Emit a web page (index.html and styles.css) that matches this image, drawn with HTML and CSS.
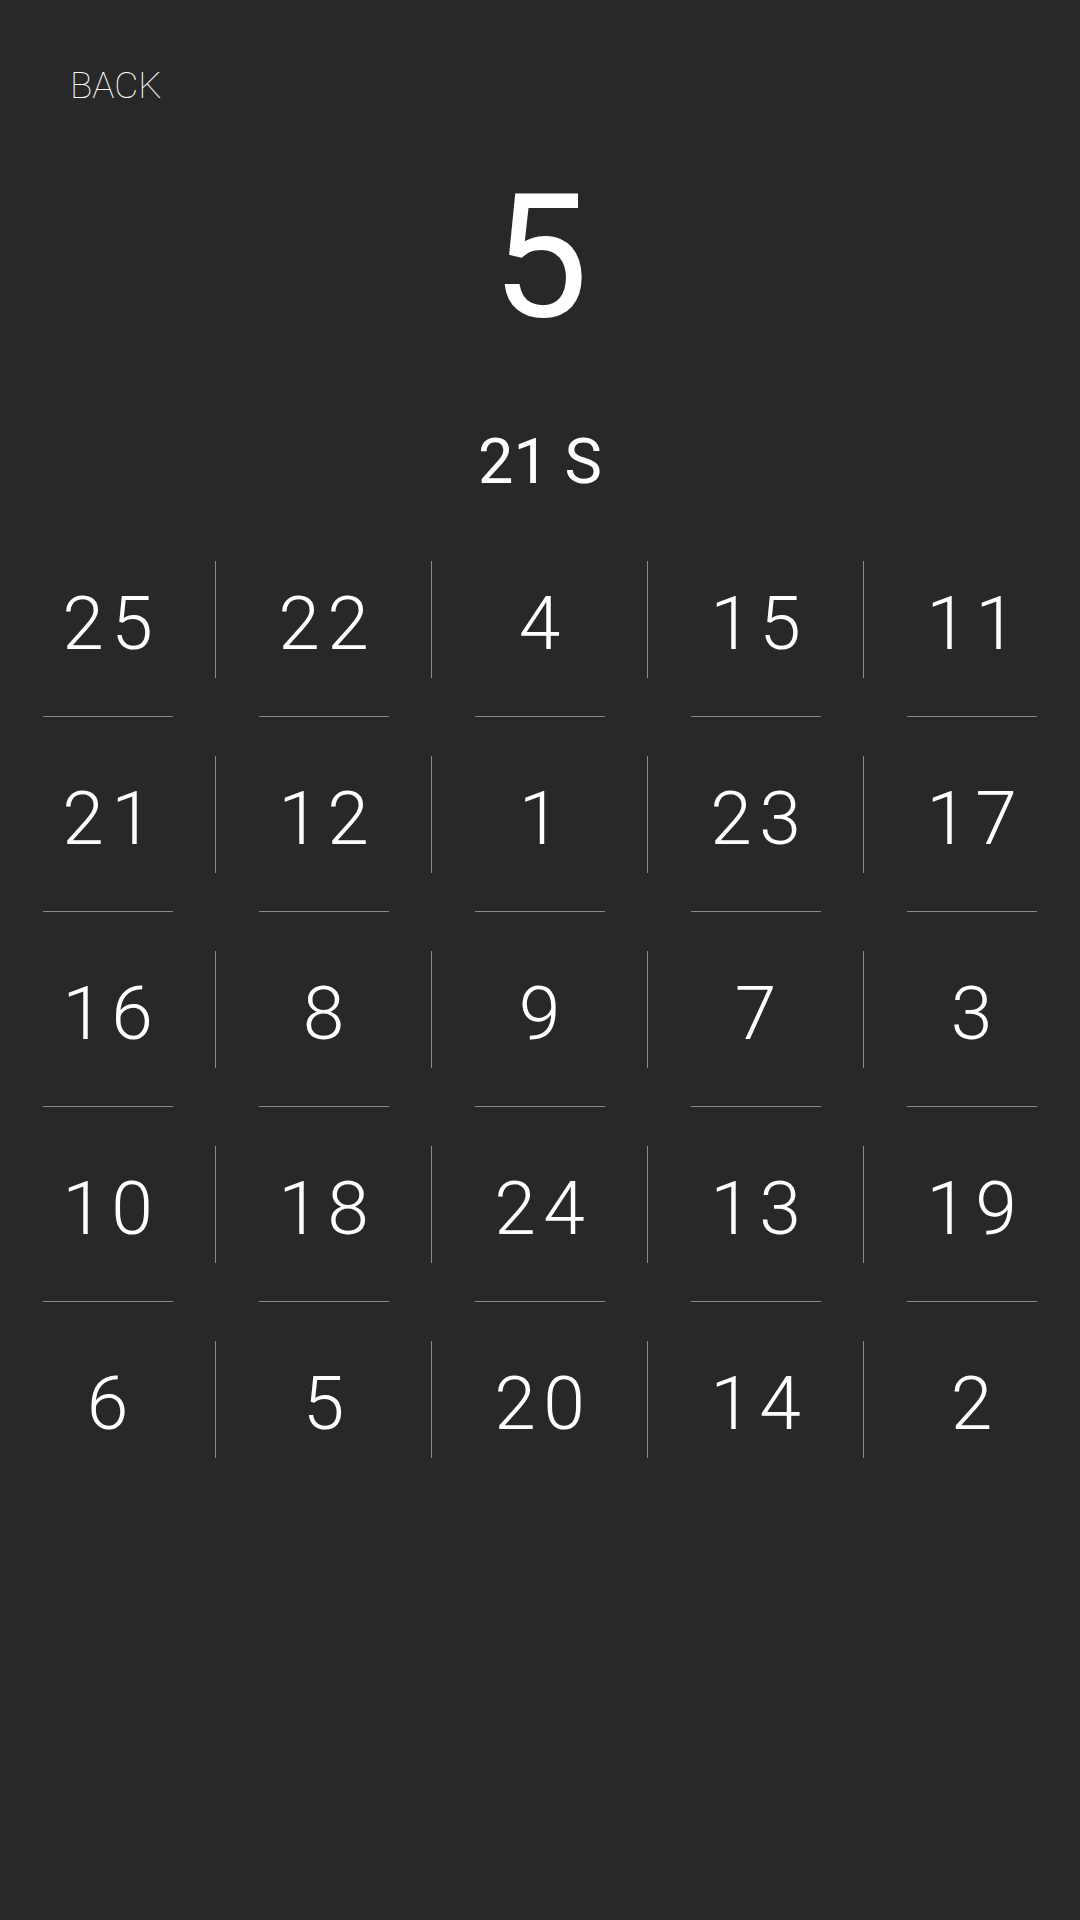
FILE: index.html
```html
<!DOCTYPE html>
<html lang="en">
<head>
    <meta charset="UTF-8">
    <meta name="viewport" content="width=device-width, initial-scale=1.0">
    <title>Schulte Table</title>
    <link rel="stylesheet" href="styles.css">
</head>
<body>
    <div class="screen">
        <div class="topbar">
            <a class="back" href="#">BACK</a>
        </div>

        <div class="next">5</div>
        <div class="timer">21 S</div>

        <div class="board">
            <div class="cell"><div class="num">25</div><div class="rule"></div></div>
            <div class="cell"><div class="num">22</div><div class="rule"></div></div>
            <div class="cell"><div class="num">4</div><div class="rule"></div></div>
            <div class="cell"><div class="num">15</div><div class="rule"></div></div>
            <div class="cell"><div class="num">11</div><div class="rule"></div></div>

            <div class="cell"><div class="num">21</div><div class="rule"></div></div>
            <div class="cell"><div class="num">12</div><div class="rule"></div></div>
            <div class="cell"><div class="num">1</div><div class="rule"></div></div>
            <div class="cell"><div class="num">23</div><div class="rule"></div></div>
            <div class="cell"><div class="num">17</div><div class="rule"></div></div>

            <div class="cell"><div class="num">16</div><div class="rule"></div></div>
            <div class="cell"><div class="num">8</div><div class="rule"></div></div>
            <div class="cell"><div class="num">9</div><div class="rule"></div></div>
            <div class="cell"><div class="num">7</div><div class="rule"></div></div>
            <div class="cell"><div class="num">3</div><div class="rule"></div></div>

            <div class="cell"><div class="num">10</div><div class="rule"></div></div>
            <div class="cell"><div class="num">18</div><div class="rule"></div></div>
            <div class="cell"><div class="num">24</div><div class="rule"></div></div>
            <div class="cell"><div class="num">13</div><div class="rule"></div></div>
            <div class="cell"><div class="num">19</div><div class="rule"></div></div>

            <div class="cell"><div class="num">6</div><div class="rule"></div></div>
            <div class="cell"><div class="num">5</div><div class="rule"></div></div>
            <div class="cell"><div class="num">20</div><div class="rule"></div></div>
            <div class="cell"><div class="num">14</div><div class="rule"></div></div>
            <div class="cell"><div class="num">2</div><div class="rule"></div></div>
        </div>
    </div>
</body>
</html>
```

FILE: styles.css
```css
body { margin: 0; background: #282828; color: #fff; font-family: Roboto, "Liberation Sans", sans-serif; }
.screen { width: 1080px; height: 1920px; }
.topbar { padding: 67px 0 0 70px; height: 37px; }
.back { font-size: 37px; font-weight: 100; line-height: 37px; color: #fff; text-decoration: none; }
.next { margin-top: 67px; text-align: center; font-size: 172px; line-height: 172px; font-weight: 400; }
.timer { margin-top: 87px; text-align: center; font-size: 63px; line-height: 63px; font-weight: 400; }
.board { margin-top: 29px; display: grid; grid-template-columns: repeat(5, 216px); grid-auto-rows: 195px; }
.cell { display: flex; flex-direction: column; }
.num { margin-top: 39px; height: 117px; box-sizing: border-box; padding: 6px 0 0 0.1em; border-right: 1px solid #8a8a8a; display: flex; align-items: center; justify-content: center; font-size: 75px; font-weight: 300; letter-spacing: 0.1em; }
.rule { margin: 38px 43px 0; height: 1px; background: #8a8a8a; }
.cell:nth-child(5n) .num { border-right-color: transparent; }
.cell:nth-child(n+21) .rule { visibility: hidden; }
```
